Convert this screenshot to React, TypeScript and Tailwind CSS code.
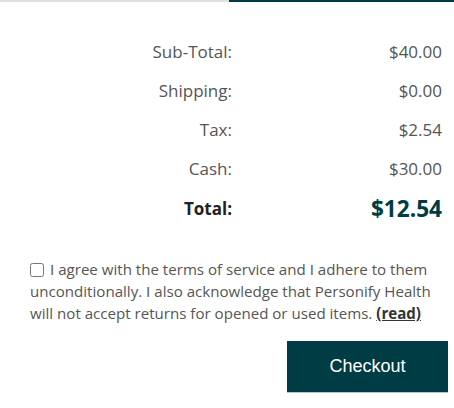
import React from "react";

const rows = [
  { label: "Sub-Total:", value: "$40.00" },
  { label: "Shipping:", value: "$0.00" },
  { label: "Tax:", value: "$2.54" },
  { label: "Cash:", value: "$30.00" },
];

export default function App() {
  return (
    <div className="w-[454px] h-[408px] bg-white" style={{ fontFamily: '"Open Sans", sans-serif' }}>
      <div className="flex h-[2px]">
        <div className="w-[229px] bg-[#e0e0e0]" />
        <div className="flex-1 bg-[#003c43]" />
      </div>
      <div className="pt-[30px]">
        {rows.map((r) => (
          <div key={r.label} className="flex h-[39px] items-center text-[17px] text-[#555]">
            <div className="w-[232px] text-right">{r.label}</div>
            <div className="w-[210px] text-right">{r.value}</div>
          </div>
        ))}
        <div className="flex h-[42px] items-center">
          <div className="w-[232px] text-right text-[17px] font-bold text-[#222]">Total:</div>
          <div className="w-[210px] text-right text-[22.6px] font-bold text-[#003c43]">$12.54</div>
        </div>
      </div>
      <div className="pl-[30px] pr-[4px] pt-[28px] text-[15.1px] leading-[22px] text-[#555]">
        <label>
          <input type="checkbox" className="mr-[6px] h-[14px] w-[14px] align-[-2px]" />
          I agree with the terms of service and I adhere to them unconditionally. I also acknowledge that Personify Health will not accept returns for opened or used items.{" "}
          <a className="font-bold underline text-[#333]">(read)</a>
        </label>
      </div>
      <div className="flex justify-end pr-[6px] pt-[17px]">
        <button
          className="h-[52px] w-[161px] bg-[#003c43] border-b border-[#b7c7c9] text-white text-[18px]"
          style={{ fontFamily: '"Liberation Sans", Arial, sans-serif' }}
        >
          Checkout
        </button>
      </div>
    </div>
  );
}
